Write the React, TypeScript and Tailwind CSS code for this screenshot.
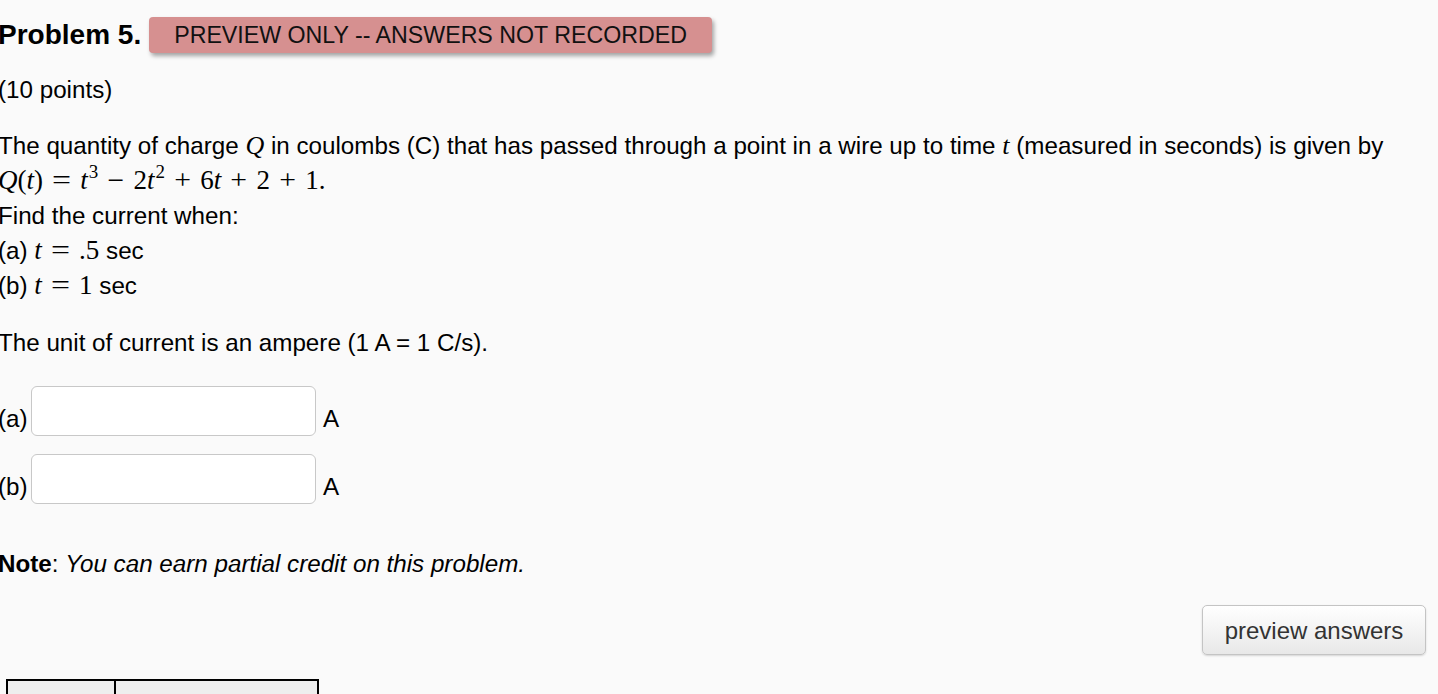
import { useState } from "react";

const sans = "font-['Liberation_Sans',Arial,sans-serif]";
const serif = "font-['Liberation_Serif','Times_New_Roman',serif]";

function V({ children }: { children: React.ReactNode }) {
  return <span className={`${serif} italic text-[26px]`}>{children}</span>;
}

// math run, MathJax-ish spacing around relations / binary ops
function M({ children }: { children: React.ReactNode }) {
  return <span className={`${serif} text-[27px] leading-[30px]`}>{children}</span>;
}
const Rel = ({ c }: { c: string }) => (
  <span className="mx-[11px] inline-block scale-x-125">{c}</span>
);
const Bin = ({ c }: { c: string }) => (
  <span className="mx-[10px] inline-block scale-x-110">{c}</span>
);
const I = ({ c }: { c: string }) => <span className="italic">{c}</span>;
const Sup = ({ c }: { c: string }) => (
  <span className="relative top-[-11px] ml-[1px] text-[19px]">{c}</span>
);

function AnswerRow({ label }: { label: string }) {
  const [value, setValue] = useState("");
  return (
    <div className="flex items-end">
      <span className="w-[33px]">{label}</span>
      <input
        value={value}
        onChange={(e) => setValue(e.target.value)}
        className="h-[50px] w-[285px] rounded-[6px] border border-[#c8c8c8] bg-white px-2 outline-none"
      />
      <span className="ml-[7px]">A</span>
    </div>
  );
}

export default function App() {
  return (
    <div className={`${sans} min-h-[694px] w-full overflow-hidden bg-[#fafafa] text-[24.2px] leading-[35px] text-black`}>
      <div className="ml-[-2px] pr-[12px]">
        {/* header */}
        <div className="flex items-center pt-[17px]">
          <span className="text-[28px] font-bold leading-[36px]">Problem 5.</span>
          <span className="ml-[8px] rounded-[4px] bg-[#d69090] px-[25px] pt-[1px] text-[23.2px] leading-[35px] text-[#111] shadow-[2px_3px_4px_rgba(0,0,0,0.35)]">
            PREVIEW ONLY -- ANSWERS NOT RECORDED
          </span>
        </div>

        <p className="mt-[19px]">(10 points)</p>

        <div className="mt-[21px]">
          <p>
            The quantity of charge <V>Q</V> in coulombs (C) that has passed through a point in a wire up to time <V>t</V> (measured in seconds) is given by
          </p>
          <p>
            <M>
              <I c="Q" />(<I c="t" />)<Rel c="=" />
              <I c="t" />
              <Sup c="3" />
              <Bin c="−" />2<I c="t" />
              <Sup c="2" />
              <Bin c="+" />6<I c="t" />
              <Bin c="+" />2<Bin c="+" />1.
            </M>
          </p>
          <p>Find the current when:</p>
          <p>
            (a){" "}
            <M>
              <I c="t" />
              <Rel c="=" />.5
            </M>{" "}
            sec
          </p>
          <p>
            (b){" "}
            <M>
              <I c="t" />
              <Rel c="=" />1
            </M>{" "}
            sec
          </p>
        </div>

        <p className="mt-[22px]">The unit of current is an ampere (1 A = 1 C/s).</p>

        <div className="mt-[26px] flex flex-col gap-[18px]">
          <AnswerRow label="(a)" />
          <AnswerRow label="(b)" />
        </div>

        <p className="mt-[42px]">
          <span className="font-bold">Note</span>: <span className="italic">You can earn partial credit on this problem.</span>
        </p>

        <div className="mt-[24px] flex justify-end">
          <button className="h-[50px] w-[224px] rounded-[5px] border border-[#c4c4c4] bg-gradient-to-b from-white to-[#e8e8e8] text-[24px] text-[#333] shadow-[0_1px_2px_rgba(0,0,0,0.15)]">
            preview answers
          </button>
        </div>

        <div className="ml-[8px] mt-[24px] flex h-[30px] w-[313px] border-2 border-black bg-[#eeeeee]">
          <div className="w-[108px] border-r-2 border-black" />
          <div className="flex-1" />
        </div>
      </div>
    </div>
  );
}
